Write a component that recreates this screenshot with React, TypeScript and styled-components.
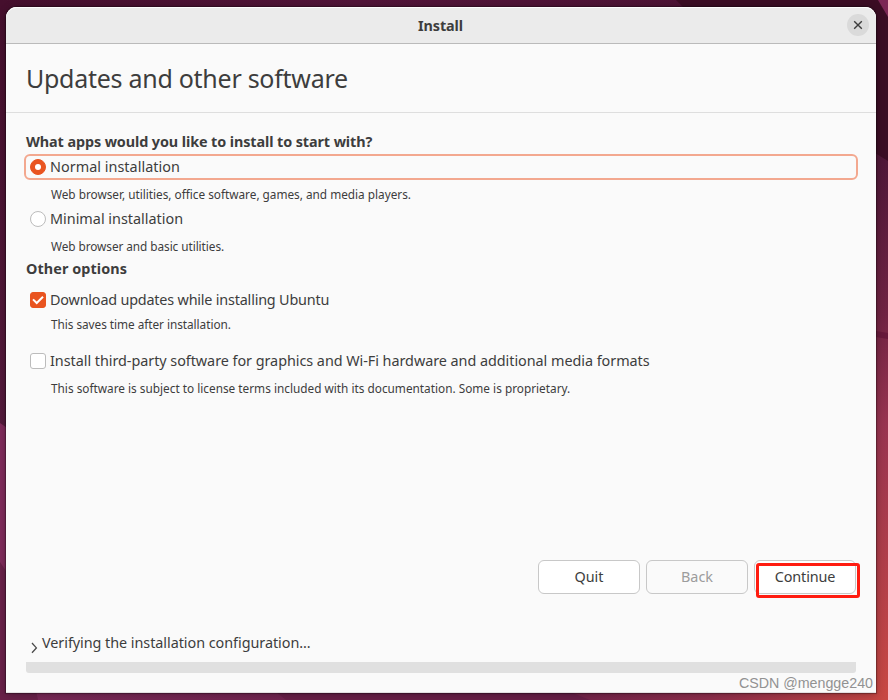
import React from 'react';
import styled, { createGlobalStyle } from 'styled-components';

const GlobalStyle = createGlobalStyle`
  * { box-sizing: border-box; }
  body { margin: 0; overflow: hidden; }
  button { font: inherit; color: inherit; padding: 0; }
`;

const Desktop = styled.div`
  position: relative;
  width: 888px;
  height: 700px;
  padding: 7px 12px 7px 6px;
  overflow: hidden;
  background: #4a1333;
  font-family: 'Noto Sans', 'Open Sans', sans-serif;
  color: #3d3d3d;
`;

const Wallpaper = styled.svg`
  position: absolute;
  inset: 0;
`;

const Window = styled.main`
  position: relative;
  display: flex;
  flex-direction: column;
  height: 686px;
  background: #fafafa;
  border-radius: 11px 11px 0 0;
  box-shadow: 0 0 1px 1px rgba(0, 0, 0, 0.3), 0 1px 8px rgba(0, 0, 0, 0.3), inset 0 -1px #e2dfe1;
`;

const TitleBar = styled.header`
  display: grid;
  grid-template-columns: 36px 1fr 36px;
  align-items: center;
  height: 37px;
  background: #ebebeb;
  border-bottom: 1px solid #bababa;
  border-radius: 11px 11px 0 0;
  box-shadow: inset 0 1px #fdfdfd;
`;

const WindowTitle = styled.h1`
  grid-column: 2;
  margin: 2px 1px 0 0;
  text-align: center;
  font-size: 14.4px;
  line-height: 20px;
  letter-spacing: -0.1px;
`;

const CloseButton = styled.button`
  display: grid;
  place-items: center;
  width: 22px;
  height: 22px;
  margin-left: 7px;
  border: 0;
  border-radius: 50%;
  background: #dadada;
`;

const PageHeader = styled.div`
  height: 69px;
  padding: 17px 20px 0;
  border-bottom: 1px solid #dedede;
`;

const PageTitle = styled.h2`
  margin: 0;
  font-size: 25px;
  font-weight: 400;
  line-height: 34px;
  letter-spacing: -0.27px;
`;

const Content = styled.section`
  display: flex;
  flex-direction: column;
  flex: 1;
  padding: 19px 18px 20px;
`;

const SectionTitle = styled.h3<{ $gap: number; $tracking: number }>`
  margin: 0 2px ${p => p.$gap}px;
  font-size: 14.4px;
  line-height: 20px;
  letter-spacing: ${p => p.$tracking}px;
  white-space: nowrap;
`;

const Option = styled.label<{ $focused?: boolean; $tracking?: number }>`
  display: flex;
  align-items: center;
  gap: 4px;
  height: 26px;
  padding: 0 4px;
  border: 2px solid ${p => (p.$focused ? '#f3a88f' : 'transparent')};
  border-radius: 6px;
  font-size: 14.4px;
  line-height: 20px;
  letter-spacing: ${p => p.$tracking ?? 0}px;
  white-space: nowrap;
`;

const Radio = styled.span<{ $checked?: boolean }>`
  flex: none;
  display: grid;
  place-items: center;
  width: 16px;
  height: 16px;
  border: 1px solid ${p => (p.$checked ? '#e95420' : '#bcbcbc')};
  border-radius: 50%;
  background: ${p => (p.$checked ? '#e95420' : '#fff')};

  &::after {
    content: '';
    width: 6px;
    height: 6px;
    border-radius: 50%;
    background: #fff;
  }
`;

const Check = styled.span<{ $checked?: boolean }>`
  flex: none;
  display: grid;
  place-items: center;
  width: 16px;
  height: 16px;
  border: 1px solid ${p => (p.$checked ? '#e95420' : '#bcbcbc')};
  border-radius: 3px;
  background: ${p => (p.$checked ? '#e95420' : '#fff')};
`;

const Hint = styled.p<{ $top: number; $bottom: number; $tracking: number }>`
  margin: ${p => p.$top}px 0 ${p => p.$bottom}px 27px;
  font-size: 11.8px;
  line-height: 16px;
  letter-spacing: ${p => p.$tracking}px;
  white-space: nowrap;
`;

const Actions = styled.div`
  display: flex;
  justify-content: flex-end;
  gap: 6px;
  margin: auto 2px 39px;
`;

const ActionSlot = styled.div`
  position: relative;
`;

const ActionButton = styled.button<{ $tracking?: number }>`
  display: block;
  width: 102px;
  height: 34px;
  border: 1px solid #c8c8c8;
  border-radius: 6px;
  background: #fff;
  font-size: 14.4px;
  line-height: 20px;
  letter-spacing: ${p => p.$tracking ?? 0}px;

  &:disabled {
    background: #fafafa;
    color: #9c9c9c;
  }
`;

const Highlight = styled.span`
  position: absolute;
  left: 2px;
  top: 3px;
  width: 104px;
  height: 35px;
  border: 3px solid #ff1c10;
  border-radius: 3px;
`;

const Status = styled.div`
  display: flex;
  align-items: flex-start;
  gap: 4px;
  height: 21px;
  padding-left: 7px;
  font-size: 14.4px;
  line-height: 20px;
  letter-spacing: -0.05px;

  svg { margin-top: 9px; }
`;

const ProgressTrack = styled.div`
  height: 11px;
  margin: 8px 2px 0;
  background: #e0e0e0;
  border-radius: 0 0 3px 3px;
`;

const Watermark = styled.span`
  position: absolute;
  right: 15px;
  bottom: 8px;
  font: 14.25px/18px 'Liberation Sans', sans-serif;
  color: #929292;
  white-space: nowrap;
`;

export default function App() {
  return (
    <>
      <GlobalStyle />
      <Desktop>
        <Wallpaper width="888" height="700" viewBox="0 0 888 700" aria-hidden="true">
          <defs>
            <linearGradient id="left" x1="0" y1="0" x2="0" y2="1">
              <stop offset="0" stopColor="#450f2d" />
              <stop offset="1" stopColor="#5e2145" />
            </linearGradient>
            <linearGradient id="top" x1="0" y1="0" x2="1" y2="0">
              <stop offset="0" stopColor="#450f2d" />
              <stop offset="0.4" stopColor="#521539" />
              <stop offset="1" stopColor="#4b1233" />
            </linearGradient>
            <linearGradient id="right" x1="0" y1="0" x2="0" y2="1">
              <stop offset="0" stopColor="#4d1737" />
              <stop offset="0.3" stopColor="#702342" />
              <stop offset="0.5" stopColor="#983450" />
              <stop offset="1" stopColor="#c84843" />
            </linearGradient>
            <linearGradient id="bottom" x1="0" y1="0" x2="1" y2="0">
              <stop offset="0" stopColor="#792957" />
              <stop offset="0.6" stopColor="#6b2049" />
              <stop offset="0.8" stopColor="#8e2e4c" />
              <stop offset="1" stopColor="#c84843" />
            </linearGradient>
          </defs>
          <path d="M0 0H440V690H0Z" fill="url(#left)" />
          <path d="M0 0H888V20H0Z" fill="url(#top)" />
          <path d="M676 0H888V170H870L690 14Z" fill="#3b0d24" />
          <path d="M878 0H888V17Z" fill="#7c2755" />
          <path d="M870 150L888 161V700H870Z" fill="url(#right)" />
          <path d="M870 300L888 302V339L870 336Z" fill="#852b49" opacity="0" />
          <path d="M870 330L888 333V339L870 336Z" fill="#681a3b" />
          <path d="M0 423L10 430V700H0Z" fill="#802b5b" />
          <path d="M0 690H888V700H0Z" fill="url(#bottom)" />
          <path d="M0 562L12 580L38 700H0Z" fill="#692149" />
          <path d="M276 692H570L590 700H286Z" fill="#681f47" />
        </Wallpaper>
        <Window>
          <TitleBar>
            <WindowTitle>Install</WindowTitle>
            <CloseButton aria-label="Close">
              <svg width="10" height="10" viewBox="0 0 10 10">
                <path d="M1.2 1.2L8.8 8.8M8.8 1.2L1.2 8.8" stroke="#3d3d3d" strokeWidth="1.4" />
              </svg>
            </CloseButton>
          </TitleBar>
          <PageHeader>
            <PageTitle>Updates and other software</PageTitle>
          </PageHeader>
          <Content>
            <SectionTitle $gap={2} $tracking={-0.1}>What apps would you like to install to start with?</SectionTitle>
            <Option $focused $tracking={0.03}>
              <Radio $checked />
              Normal installation
            </Option>
            <Hint $top={6} $bottom={4} $tracking={-0.01}>
              Web browser, utilities, office software, games, and media players.
            </Hint>
            <Option>
              <Radio />
              Minimal installation
            </Option>
            <Hint $top={6} $bottom={5} $tracking={-0.06}>Web browser and basic utilities.</Hint>
            <SectionTitle $gap={8} $tracking={0.08}>Other options</SectionTitle>
            <Option $tracking={-0.195}>
              <Check $checked>
                <svg width="12" height="10" viewBox="0 0 12 10">
                  <path d="M1 4.4L4.7 8L11 1.7" fill="none" stroke="#fff" strokeWidth="2" />
                </svg>
              </Check>
              Download updates while installing Ubuntu
            </Option>
            <Hint $top={3} $bottom={16} $tracking={-0.04}>This saves time after installation.</Hint>
            <Option $tracking={-0.045}>
              <Check />
              Install third-party software for graphics and Wi-Fi hardware and additional media formats
            </Option>
            <Hint $top={6} $bottom={0} $tracking={0.005}>
              This software is subject to license terms included with its documentation. Some is proprietary.
            </Hint>
            <Actions>
              <ActionButton>Quit</ActionButton>
              <ActionButton disabled>Back</ActionButton>
              <ActionSlot>
                <ActionButton $tracking={-0.15}>Continue</ActionButton>
                <Highlight />
              </ActionSlot>
            </Actions>
            <Status>
              <svg width="7" height="12" viewBox="0 0 7 12">
                <path d="M1 1L5.4 5.9L1 10.8" fill="none" stroke="#4a4a4a" strokeWidth="1.3" />
              </svg>
              Verifying the installation configuration...
            </Status>
            <ProgressTrack />
          </Content>
        </Window>
        <Watermark>CSDN @mengge240</Watermark>
      </Desktop>
    </>
  );
}
